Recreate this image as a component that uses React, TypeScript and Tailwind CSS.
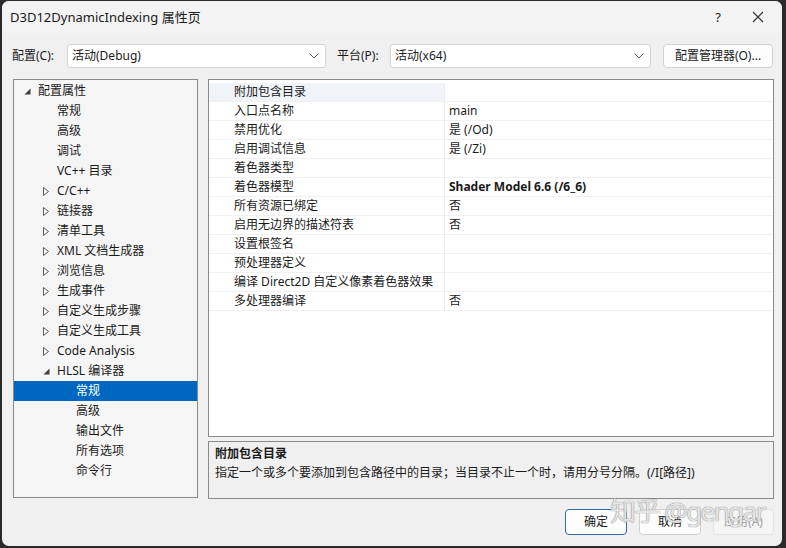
import React from 'react'

const FONT = '"Noto Sans", "Noto Sans CJK SC", sans-serif'

interface TreeItem {
  label: string
  indent: number
  arrow?: 'open' | 'closed'
  selected?: boolean
}

const tree: TreeItem[] = [
  { label: '配置属性', indent: 0, arrow: 'open' },
  { label: '常规', indent: 2 },
  { label: '高级', indent: 2 },
  { label: '调试', indent: 2 },
  { label: 'VC++ 目录', indent: 2 },
  { label: 'C/C++', indent: 1, arrow: 'closed' },
  { label: '链接器', indent: 1, arrow: 'closed' },
  { label: '清单工具', indent: 1, arrow: 'closed' },
  { label: 'XML 文档生成器', indent: 1, arrow: 'closed' },
  { label: '浏览信息', indent: 1, arrow: 'closed' },
  { label: '生成事件', indent: 1, arrow: 'closed' },
  { label: '自定义生成步骤', indent: 1, arrow: 'closed' },
  { label: '自定义生成工具', indent: 1, arrow: 'closed' },
  { label: 'Code Analysis', indent: 1, arrow: 'closed' },
  { label: 'HLSL 编译器', indent: 1, arrow: 'open' },
  { label: '常规', indent: 3, selected: true },
  { label: '高级', indent: 3 },
  { label: '输出文件', indent: 3 },
  { label: '所有选项', indent: 3 },
  { label: '命令行', indent: 3 },
]

const props: { name: string; value: string; bold?: boolean }[] = [
  { name: '附加包含目录', value: '' },
  { name: '入口点名称', value: 'main' },
  { name: '禁用优化', value: '是 (/Od)' },
  { name: '启用调试信息', value: '是 (/Zi)' },
  { name: '着色器类型', value: '' },
  { name: '着色器模型', value: 'Shader Model 6.6 (/6_6)', bold: true },
  { name: '所有资源已绑定', value: '否' },
  { name: '启用无边界的描述符表', value: '否' },
  { name: '设置根签名', value: '' },
  { name: '预处理器定义', value: '' },
  { name: '编译 Direct2D 自定义像素着色器效果', value: '' },
  { name: '多处理器编译', value: '否' },
]

// padding-left for each tree depth (text x positions 38 / 57 / 57 / 76)
const indentPad = ['pl-[24px]', 'pl-[43px]', 'pl-[43px]', 'pl-[62px]']
const arrowPad = ['left-[10px]', 'left-[29px]']

function Chevron() {
  return (
    <svg width="10" height="6" viewBox="0 0 10 6" className="text-[#606060]">
      <path d="M0.5 0.5 L5 5 L9.5 0.5" fill="none" stroke="currentColor" strokeWidth="1" />
    </svg>
  )
}

function Combo({ text, className }: { text: string; className: string }) {
  return (
    <div className={`flex items-center justify-between h-[24px] pl-[4px] pr-[6px] bg-white border border-[#d4d4d4] rounded-[3px] ${className}`}>
      <span>{text}</span>
      <Chevron />
    </div>
  )
}

function TreeArrow({ kind }: { kind: 'open' | 'closed' }) {
  if (kind === 'open') {
    return (
      <svg width="7" height="7" viewBox="0 0 7 7">
        <path d="M6.5 0.5 L6.5 6.5 L0.5 6.5 Z" fill="#404040" />
      </svg>
    )
  }
  return (
    <svg width="6" height="9" viewBox="0 0 6 9">
      <path d="M0.5 0.5 L5.5 4.5 L0.5 8.5 Z" fill="none" stroke="#5a5a5a" strokeWidth="1" />
    </svg>
  )
}

export default function App() {
  return (
    <div className="w-[786px] h-[548px] bg-[#2a2a2a] pt-[1px] pl-[2px] relative overflow-hidden" style={{ fontFamily: FONT }}>
      <div className="w-[780px] h-[545px] bg-[#f0f0f0] rounded-[7px] flex flex-col text-[12px] text-[#1a1a1a] leading-none">
        {/* Title bar */}
        <div className="h-[32px] flex items-center pl-[8px] bg-[#f3f3f3] rounded-t-[7px]">
          <span className="text-[13px] flex-1">D3D12DynamicIndexing 属性页</span>
          <span className="w-[20px] text-center text-[13px] mr-[24px]">?</span>
          <svg width="12" height="12" viewBox="0 0 12 12" className="mr-[18px]">
            <path d="M1 1 L11 11 M11 1 L1 11" stroke="#333" strokeWidth="1.1" />
          </svg>
        </div>

        {/* Config row */}
        <div className="flex items-center h-[26px] mt-[10px] pl-[10px]">
          <span className="w-[55px]">配置(C):</span>
          <Combo text="活动(Debug)" className="w-[259px]" />
          <span className="ml-[11px] w-[53px]">平台(P):</span>
          <Combo text="活动(x64)" className="w-[261px]" />
          <div className="ml-[12px] w-[110px] h-[24px] flex items-center justify-center bg-[#fdfdfd] border border-[#d0d0d0] rounded-[4px]">
            配置管理器(O)...
          </div>
        </div>

        {/* Main */}
        <div className="flex mt-[10px] pl-[11px] pr-[8px] gap-[10px]">
          {/* Tree */}
          <div className="w-[185px] h-[419px] bg-[#f5f5f5] border border-[#8a8a8a] pt-[1px]">
            {tree.map((t, i) => (
              <div
                key={i}
                className={`relative h-[20px] flex items-center ${indentPad[t.indent]} ${t.selected ? 'bg-[#0067c0] text-white' : ''}`}
              >
                {t.arrow && (
                  <span className={`absolute top-0 h-[20px] flex items-center ${arrowPad[t.indent]}`}>
                    <TreeArrow kind={t.arrow} />
                  </span>
                )}
                {t.label}
              </div>
            ))}
          </div>

          {/* Right column */}
          <div className="flex-1 flex flex-col">
            <div className="h-[358px] bg-white border border-[#8a8a8a] pt-[3px]">
              {props.map((p, i) => (
                <div key={i} className="flex h-[19px] border-b border-[#f0f0f0]">
                  <div className={`w-[236px] pl-[25px] flex items-center border-r border-[#ececec] ${i === 0 ? 'bg-[#f0f3f7]' : ''}`}>
                    {p.name}
                  </div>
                  <div className={`flex-1 pl-[4px] flex items-center ${p.bold ? 'font-bold' : ''}`}>{p.value}</div>
                </div>
              ))}
            </div>
            <div className="h-[58px] mt-[4px] bg-[#f0f0f0] border border-[#8a8a8a] px-[6px] pt-[3px]">
              <div className="font-bold h-[18px] flex items-center">附加包含目录</div>
              <div className="h-[19px] flex items-center">指定一个或多个要添加到包含路径中的目录；当目录不止一个时，请用分号分隔。(/I[路径])</div>
            </div>
          </div>
        </div>

        {/* Buttons */}
        <div className="flex justify-end gap-[12px] pr-[8px] mt-[10px]">
          <div className="w-[62px] h-[26px] flex items-center justify-center bg-[#fdfdfd] border-[1.5px] border-[#2f6aa8] rounded-[4px]">确定</div>
          <div className="w-[62px] h-[26px] flex items-center justify-center bg-[#fdfdfd] border border-[#d0d0d0] rounded-[4px]">取消</div>
          <div className="w-[61px] h-[26px] flex items-center justify-center bg-[#f5f5f5] border border-[#e4e4e4] rounded-[4px] text-[#a0a0a0]">应用(A)</div>
        </div>
      </div>

      {/* Watermark */}
      <div className="absolute left-[610px] top-[498px] whitespace-nowrap text-[26px] tracking-[-1.5px] leading-none text-white/80 [text-shadow:0_0_1px_#777,0_0_1px_#999]" style={{ fontFamily: FONT }}>
        知乎 @gengar
      </div>
    </div>
  )
}
